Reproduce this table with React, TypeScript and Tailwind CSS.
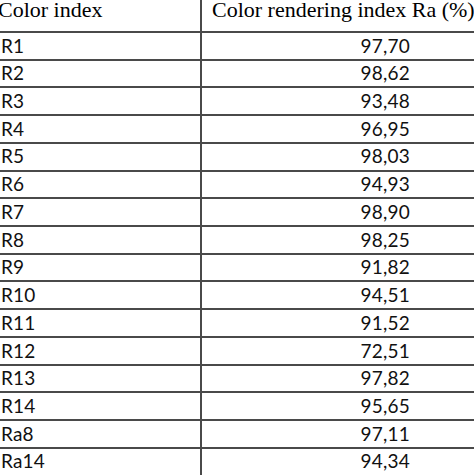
const rows: [string, string][] = [
  ["R1", "97,70"],
  ["R2", "98,62"],
  ["R3", "93,48"],
  ["R4", "96,95"],
  ["R5", "98,03"],
  ["R6", "94,93"],
  ["R7", "98,90"],
  ["R8", "98,25"],
  ["R9", "91,82"],
  ["R10", "94,51"],
  ["R11", "91,52"],
  ["R12", "72,51"],
  ["R13", "97,82"],
  ["R14", "95,65"],
  ["Ra8", "97,11"],
  ["Ra14", "94,34"],
];

export default function App() {
  return (
    <div className="w-[474px] h-[475px] overflow-hidden bg-white text-black">
      {/* header */}
      <div className="flex h-[31px] font-['Liberation_Serif',serif] text-[22px] leading-[18px]">
        <div className="w-[200px] shrink-0 ml-[-2px] pt-[1px]">Color index</div>
        <div className="border-l-2 border-[#4a4a4a] pl-[10px] pt-[1px] whitespace-nowrap ml-[2px]">
          Color rendering index Ra (%)
        </div>
      </div>

      {/* body */}
      {rows.map(([name, value]) => (
        <div
          key={name}
          className="flex h-[27.73px] box-border border-t-2 border-[#4a4a4a] font-['Lato',sans-serif] text-[19px] tracking-[0.2px] text-[#111]"
        >
          <div className="w-[200px] shrink-0 flex items-center pl-[1px]">{name}</div>
          <div className="w-[210px] shrink-0 border-l-2 border-[#4a4a4a] flex items-center justify-end">
            {value}
          </div>
        </div>
      ))}
    </div>
  );
}
